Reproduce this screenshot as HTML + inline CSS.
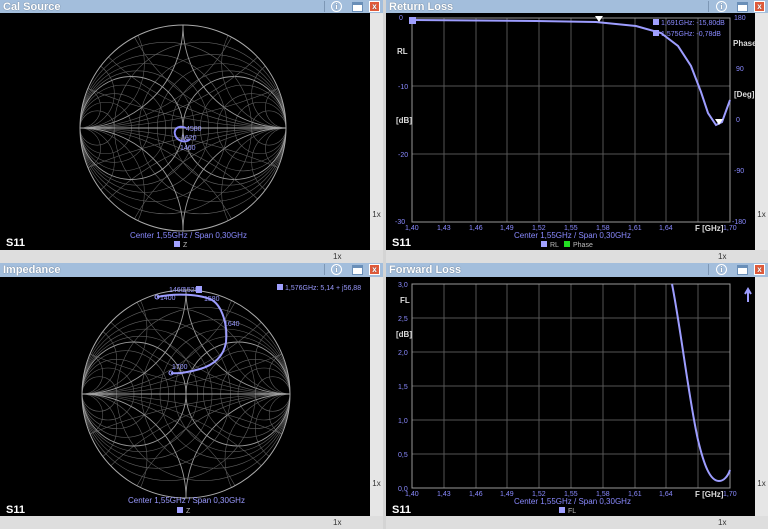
<!DOCTYPE html>
<html style="overflow:hidden"><head><meta charset="utf-8"><style>
*{margin:0;padding:0;box-sizing:border-box}
body{width:768px;height:529px;background:#d4d4d4;position:relative;overflow:hidden;font-family:"Liberation Sans",sans-serif}
.p{position:absolute}
.title{background:#a3bedc;color:#fff;font-weight:bold;font-size:11px;line-height:14px;padding-left:3px;text-shadow:0 0 1px #456;overflow:hidden}
.chart{background:#000}
.vs{background:#e6e6e6}
.hs{background:#dedede}
.close{position:absolute;top:1px;width:11px;height:11px;background:#e05a3a;border:1px solid #fff;color:#fff;font-size:8px;line-height:9px;text-align:center}
.max{position:absolute;top:2px;width:11px;height:10px;background:#fff;border:1px solid #6a8fb8;border-top:3px solid #6a8fb8}
.info{position:absolute;top:1px;width:11px;height:11px;border-radius:50%;border:1px solid #fff;color:#fff;font-size:8px;line-height:9px;text-align:center;font-family:"Liberation Serif",serif}
.sep{position:absolute;top:1px;width:1px;height:11px;background:#7d97b5}
svg text{font-family:"Liberation Sans",sans-serif}
</style></head><body>
<svg width="0" height="0" style="position:absolute">
<defs>
<clipPath id="uc"><circle cx="0" cy="0" r="1"/></clipPath>
<g id="half" fill="none">
<g stroke="#5e5e5e" stroke-width="0.6">
<circle vector-effect="non-scaling-stroke" cx=".1667" cy="0" r=".8333"/><circle vector-effect="non-scaling-stroke" cx=".2857" cy="0" r=".7143"/><circle vector-effect="non-scaling-stroke" cx=".375" cy="0" r=".625"/><circle vector-effect="non-scaling-stroke" cx=".4444" cy="0" r=".5556"/><circle vector-effect="non-scaling-stroke" cx=".5833" cy="0" r=".4167"/><circle vector-effect="non-scaling-stroke" cx=".6667" cy="0" r=".3333"/><circle vector-effect="non-scaling-stroke" cx=".75" cy="0" r=".25"/><circle vector-effect="non-scaling-stroke" cx=".8333" cy="0" r=".1667"/>
<circle vector-effect="non-scaling-stroke" cx="1" cy="5" r="5"/><circle vector-effect="non-scaling-stroke" cx="1" cy="-5" r="5"/>
<circle vector-effect="non-scaling-stroke" cx="1" cy="2.5" r="2.5"/><circle vector-effect="non-scaling-stroke" cx="1" cy="-2.5" r="2.5"/>
<circle vector-effect="non-scaling-stroke" cx="1" cy="1.667" r="1.667"/><circle vector-effect="non-scaling-stroke" cx="1" cy="-1.667" r="1.667"/>
<circle vector-effect="non-scaling-stroke" cx="1" cy=".625" r=".625"/><circle vector-effect="non-scaling-stroke" cx="1" cy="-.625" r=".625"/>
<circle vector-effect="non-scaling-stroke" cx="1" cy=".3333" r=".3333"/><circle vector-effect="non-scaling-stroke" cx="1" cy="-.3333" r=".3333"/>
<circle vector-effect="non-scaling-stroke" cx="1" cy=".2" r=".2"/><circle vector-effect="non-scaling-stroke" cx="1" cy="-.2" r=".2"/>
</g>
<g stroke="#9a9a9a" stroke-width="0.9">
<circle vector-effect="non-scaling-stroke" cx=".5" cy="0" r=".5"/>
<circle vector-effect="non-scaling-stroke" cx="1" cy="1" r="1"/><circle vector-effect="non-scaling-stroke" cx="1" cy="-1" r="1"/>
</g>
</g>
<g id="smith">
<g clip-path="url(#uc)"><use href="#half"/><use href="#half" transform="scale(-1,1)"/></g>
<circle cx="0" cy="0" r="1" fill="none" stroke="#aaa" stroke-width="1" vector-effect="non-scaling-stroke"/>
<line x1="-1" y1="0" x2="1" y2="0" stroke="#aaa" stroke-width="1" vector-effect="non-scaling-stroke"/>
</g>
</defs></svg>

<!-- TOP LEFT -->
<div class="p title" style="left:0;top:0;width:383px;height:13px">Cal Source
<div class="sep" style="left:324px"></div><div class="info" style="left:331px">i</div><div class="max" style="left:352px"></div><div class="close" style="left:369px">x</div></div>
<div class="p chart" style="left:0;top:13px;width:370px;height:237px"></div>
<svg class="p" style="left:0;top:0" width="370" height="250">
<g transform="translate(183,128) scale(103)"><use href="#smith"/></g>
<g fill="none" stroke="#8f8fff" stroke-width="2"><path d="M186,128 C178,124 172,130 176,137 C180,143 188,142 190,139"/></g>
<text x="186" y="131" font-size="7" fill="#9a9aff">4580</text>
<text x="181" y="140" font-size="7" fill="#9a9aff">1620</text>
<text x="180" y="150" font-size="7" fill="#9a9aff">1460</text>
<text x="130" y="238" font-size="8" fill="#8a8aff">Center 1,55GHz / Span 0,30GHz</text>
<rect x="174" y="241" width="6" height="6" fill="#a0a0ff"/><text x="183" y="247" font-size="7" fill="#bbb">Z</text>
<text x="6" y="246" font-size="11" font-weight="bold" fill="#fff">S11</text>
</svg>
<div class="p vs" style="left:370px;top:13px;width:13px;height:237px;font-size:8px;color:#333;text-align:center"><div style="position:absolute;top:197px;width:13px">1x</div></div>
<div class="p hs" style="left:0;top:250px;width:383px;height:13px;font-size:8px;color:#333"><span style="position:absolute;left:333px;top:2px">1x</span></div>

<!-- TOP RIGHT -->
<div class="p title" style="left:386px;top:0;width:382px;height:13px">Return Loss
<div class="sep" style="left:322px"></div><div class="info" style="left:330px">i</div><div class="max" style="left:351px"></div><div class="close" style="left:368px">x</div></div>
<div class="p chart" style="left:386px;top:13px;width:369px;height:237px"></div>
<svg class="p" style="left:386px;top:0" width="369" height="250">
<g stroke="#555" stroke-width="1">
<line x1="26" y1="86" x2="344" y2="86"/><line x1="26" y1="154" x2="344" y2="154"/>
<line x1="58" y1="18" x2="58" y2="222"/><line x1="90" y1="18" x2="90" y2="222"/><line x1="121" y1="18" x2="121" y2="222"/><line x1="153" y1="18" x2="153" y2="222"/><line x1="185" y1="18" x2="185" y2="222"/><line x1="217" y1="18" x2="217" y2="222"/><line x1="249" y1="18" x2="249" y2="222"/><line x1="280" y1="18" x2="280" y2="222"/><line x1="312" y1="18" x2="312" y2="222"/>
</g>
<g stroke="#999" fill="none"><rect x="26" y="18" width="318" height="204"/></g>
<g font-size="7" fill="#8a8aff">
<text x="13" y="20">0</text><text x="12" y="89">-10</text><text x="12" y="157">-20</text><text x="9" y="224">-30</text>
<text x="19" y="230">1,40</text><text x="51" y="230">1,43</text><text x="83" y="230">1,46</text><text x="114" y="230">1,49</text><text x="146" y="230">1,52</text><text x="178" y="230">1,55</text><text x="210" y="230">1,58</text><text x="242" y="230">1,61</text><text x="273" y="230">1,64</text><text x="337" y="230">1,70</text>
<text x="348" y="20">180</text><text x="350" y="71">90</text><text x="350" y="122">0</text><text x="348" y="173">-90</text><text x="346" y="224">-180</text>
<text x="275" y="25">1,691GHz: -15,80dB</text><text x="275" y="36">1,575GHz: -0,78dB</text>
<text x="128" y="238" font-size="8">Center 1,55GHz / Span 0,30GHz</text>
</g>
<rect x="267" y="19" width="6" height="6" fill="#a0a0ff"/><rect x="267" y="30" width="6" height="6" fill="#a0a0ff"/>
<g font-size="8" fill="#ddd" font-weight="bold"><text x="11" y="54">RL</text><text x="10" y="123">[dB]</text><text x="347" y="46">Phase</text><text x="348" y="97">[Deg]</text><text x="309" y="231">F [GHz]</text></g>
<path d="M26,20 L150,21 L210,22 L250,26 L275,33 L292,46 L305,66 L315,92 L322,113 L330,125 L336,122 L344,100" fill="none" stroke="#9d9dff" stroke-width="2"/>
<rect x="23" y="17" width="7" height="7" fill="#a0a0ff"/>
<path d="M209,16 l4,6 l4,-6 z" fill="#fff"/><path d="M329,119 l4,6 l4,-6 z" fill="#fff"/>
<text x="6" y="246" font-size="11" font-weight="bold" fill="#fff">S11</text>
<rect x="155" y="241" width="6" height="6" fill="#a0a0ff"/><text x="164" y="247" font-size="7" fill="#bbb">RL</text>
<rect x="178" y="241" width="6" height="6" fill="#22dd22"/><text x="187" y="247" font-size="7" fill="#bbb">Phase</text>
</svg>
<div class="p vs" style="left:755px;top:13px;width:13px;height:237px;font-size:8px;color:#333;text-align:center"><div style="position:absolute;top:197px;width:13px">1x</div></div>
<div class="p hs" style="left:386px;top:250px;width:382px;height:13px;font-size:8px;color:#333"><span style="position:absolute;left:332px;top:2px">1x</span></div>

<!-- BOTTOM LEFT -->
<div class="p title" style="left:0;top:263px;width:383px;height:14px">Impedance
<div class="sep" style="left:324px"></div><div class="info" style="left:331px">i</div><div class="max" style="left:352px"></div><div class="close" style="left:369px">x</div></div>
<div class="p chart" style="left:0;top:277px;width:370px;height:239px"></div>
<svg class="p" style="left:0;top:0" width="370" height="516">
<g transform="translate(186,394) scale(104)"><use href="#smith"/></g>
<path d="M157,297 C175,293 200,294 212,300 C222,306 228,325 226,342 C224,356 214,365 200,369 C190,372 178,374 171,373" fill="none" stroke="#9d9dff" stroke-width="2"/>
<circle cx="157" cy="297" r="2" fill="none" stroke="#9d9dff"/><circle cx="171" cy="373" r="2" fill="none" stroke="#9d9dff"/>
<g font-size="7" fill="#9a9aff"><text x="169" y="292">1460</text><text x="183" y="292">1520</text><text x="160" y="300">1400</text><text x="204" y="301">1580</text><text x="224" y="326">1640</text><text x="172" y="369">1700</text>
<text x="285" y="290">1,576GHz: 5,14 + j56,88</text>
<text x="128" y="503" font-size="8">Center 1,55GHz / Span 0,30GHz</text></g>
<rect x="196" y="286" width="6" height="7" fill="#a0a0ff"/><rect x="277" y="284" width="6" height="6" fill="#a0a0ff"/>
<rect x="177" y="507" width="6" height="6" fill="#a0a0ff"/><text x="186" y="513" font-size="7" fill="#bbb">Z</text>
<text x="6" y="513" font-size="11" font-weight="bold" fill="#fff">S11</text>
</svg>
<div class="p vs" style="left:370px;top:277px;width:13px;height:239px;font-size:8px;color:#333;text-align:center"><div style="position:absolute;top:202px;width:13px">1x</div></div>
<div class="p hs" style="left:0;top:516px;width:383px;height:13px;font-size:8px;color:#333"><span style="position:absolute;left:333px;top:2px">1x</span></div>

<!-- BOTTOM RIGHT -->
<div class="p title" style="left:386px;top:263px;width:382px;height:14px">Forward Loss
<div class="sep" style="left:322px"></div><div class="info" style="left:330px">i</div><div class="max" style="left:351px"></div><div class="close" style="left:368px">x</div></div>
<div class="p chart" style="left:386px;top:277px;width:369px;height:239px"></div>
<svg class="p" style="left:386px;top:0" width="369" height="516">
<g stroke="#555" stroke-width="1">
<line x1="26" y1="318" x2="344" y2="318"/><line x1="26" y1="352" x2="344" y2="352"/><line x1="26" y1="386" x2="344" y2="386"/><line x1="26" y1="420" x2="344" y2="420"/><line x1="26" y1="454" x2="344" y2="454"/>
<line x1="58" y1="284" x2="58" y2="488"/><line x1="90" y1="284" x2="90" y2="488"/><line x1="121" y1="284" x2="121" y2="488"/><line x1="153" y1="284" x2="153" y2="488"/><line x1="185" y1="284" x2="185" y2="488"/><line x1="217" y1="284" x2="217" y2="488"/><line x1="249" y1="284" x2="249" y2="488"/><line x1="280" y1="284" x2="280" y2="488"/><line x1="312" y1="284" x2="312" y2="488"/>
</g>
<rect x="26" y="284" width="318" height="204" fill="none" stroke="#999"/>
<g font-size="7" fill="#8a8aff">
<text x="12" y="287">3,0</text><text x="12" y="321">2,5</text><text x="12" y="355">2,0</text><text x="12" y="389">1,5</text><text x="12" y="423">1,0</text><text x="12" y="457">0,5</text><text x="12" y="491">0,0</text>
<text x="19" y="496">1,40</text><text x="51" y="496">1,43</text><text x="83" y="496">1,46</text><text x="114" y="496">1,49</text><text x="146" y="496">1,52</text><text x="178" y="496">1,55</text><text x="210" y="496">1,58</text><text x="242" y="496">1,61</text><text x="273" y="496">1,64</text><text x="337" y="496">1,70</text>
<text x="128" y="504" font-size="8">Center 1,55GHz / Span 0,30GHz</text>
</g>
<g font-size="8" fill="#ddd" font-weight="bold"><text x="14" y="303">FL</text><text x="10" y="337">[dB]</text><text x="309" y="497">F [GHz]</text></g>
<path d="M286,284 C295,330 303,400 312,440 C318,465 324,481 333,481 C338,481 342,476 344,470" fill="none" stroke="#9d9dff" stroke-width="2"/>
<path d="M362,302 l0,-12 M359,294 l3,-5 l3,5" stroke="#9d9dff" stroke-width="2" fill="none"/>
<rect x="173" y="507" width="6" height="6" fill="#a0a0ff"/><text x="182" y="513" font-size="7" fill="#bbb">FL</text>
<text x="6" y="513" font-size="11" font-weight="bold" fill="#fff">S11</text>
</svg>
<div class="p vs" style="left:755px;top:277px;width:13px;height:239px;font-size:8px;color:#333;text-align:center"><div style="position:absolute;top:202px;width:13px">1x</div></div>
<div class="p hs" style="left:386px;top:516px;width:382px;height:13px;font-size:8px;color:#333"><span style="position:absolute;left:332px;top:2px">1x</span></div>
</body></html>
